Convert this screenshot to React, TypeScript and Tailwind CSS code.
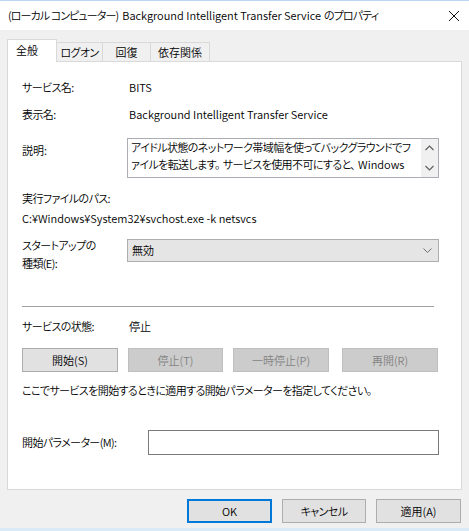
import React from "react";

const font = "font-['Noto_Sans_CJK_JP',sans-serif] [font-feature-settings:'palt'] font-[350]";
const j = "tracking-[-0.6px]";

function Btn({ children, disabled, primary, w = "w-[96px]" }: { children: React.ReactNode; disabled?: boolean; primary?: boolean; w?: string }) {
  if (primary) {
    return (
      <div className={`${w} h-[24px] flex items-center justify-center border-2 border-[#0078d7] bg-[#e1e1e1] text-black`}>
        {children}
      </div>
    );
  }
  if (disabled) {
    return (
      <div className={`${w} h-[24px] flex items-center justify-center border border-[#bfbfbf] bg-[#cccccc] text-[#838383]`}>
        {children}
      </div>
    );
  }
  return (
    <div className={`${w} h-[24px] flex items-center justify-center border border-[#adadad] bg-[#e1e1e1] text-black`}>
      {children}
    </div>
  );
}

export default function App() {
  return (
    <div className={`w-[469px] h-[531px] bg-[#f0f0f0] flex flex-col text-[11px] text-black ${font} leading-[17px] whitespace-nowrap`}>
      {/* title bar */}
      <div className="h-[30px] bg-white border-t border-[#b9d7f0] flex items-center justify-between pl-[8px] pr-[9px] shrink-0">
        <span className="text-[11px] flex">
          <span className="tracking-[-0.9px]">(ローカル コンピューター)</span>
          <span className="ml-[4px]">Background Intelligent Transfer Service</span>
          <span className="tracking-[-0.9px] ml-[3px]">のプロパティ</span>
        </span>
        <svg width="12" height="12" viewBox="0 0 12 12" className="mt-[1px]">
          <path d="M1 1 L11 11 M11 1 L1 11" stroke="#111" strokeWidth="1" />
        </svg>
      </div>

      <div className="px-[7px] flex flex-col">
        {/* tabs */}
        <div className="flex items-end h-[31px]">
          <div className="w-[50px] h-[23px] bg-white border border-b-0 border-[#d9d9d9] flex items-start pl-[8px] pt-[2px] relative z-10 -mb-[1px]">
            全般
          </div>
          <div className={`w-[46px] h-[19px] border border-b-0 border-l-0 border-[#d9d9d9] flex items-center justify-center ${j}`}>ログオン</div>
          <div className="w-[48px] h-[19px] border border-b-0 border-l-0 border-[#d9d9d9] flex items-center justify-center">回復</div>
          <div className="w-[59px] h-[19px] border border-b-0 border-l-0 border-[#d9d9d9] flex items-center justify-center">依存関係</div>
        </div>

        {/* panel */}
        <div className="h-[429px] bg-white border border-[#d9d9d9] px-[14px] flex flex-col">
          <div className="flex h-[17px] mt-[17px]">
            <div className={`w-[107px] ${j}`}>サービス名:</div>
            <div>BITS</div>
          </div>
          <div className="flex h-[17px] mt-[10px]">
            <div className={`w-[107px] ${j}`}>表示名:</div>
            <div>Background Intelligent Transfer Service</div>
          </div>
          <div className="flex mt-[15px]">
            <div className="w-[105px] pt-[4px]">説明:</div>
            <div className="w-[312px] h-[40px] border border-[#abadb3] flex">
              <div className={`flex-1 pl-[3px] leading-[17px] overflow-hidden ${j}`}>
                <div>アイドル状態のネットワーク帯域幅を使ってバックグラウンドでフ</div>
                <div>ァイルを転送します。<span className="ml-[3px]">サービスを使用不可にすると、</span><span className="tracking-normal ml-[3px]">Windows</span></div>
              </div>
              <div className="w-[17px] bg-[#f0f0f0] flex flex-col items-center justify-between py-[6px] shrink-0">
                <svg width="9" height="6" viewBox="0 0 9 6"><path d="M0.5 5 L4.5 1 L8.5 5" stroke="#606060" fill="none" strokeWidth="1.2" /></svg>
                <svg width="9" height="6" viewBox="0 0 9 6"><path d="M0.5 1 L4.5 5 L8.5 1" stroke="#606060" fill="none" strokeWidth="1.2" /></svg>
              </div>
            </div>
          </div>
          <div className={`h-[17px] mt-[12px] ${j}`}>実行ファイルのパス:</div>
          <div className="h-[17px] mt-[3px]">C:¥Windows¥System32¥svchost.exe -k netsvcs</div>
          <div className="flex mt-[9px]">
            <div className={`w-[105px] leading-[18px] ${j}`}>
              <div>スタートアップの</div>
              <div>種類(E):</div>
            </div>
            <div className="w-[312px] h-[23px] mt-[3px] border border-[#adadad] bg-[#e5e5e5] flex items-center justify-between pl-[4px] pr-[6px]">
              <span>無効</span>
              <svg width="9" height="5" viewBox="0 0 9 5"><path d="M0.5 0.5 L4.5 4.5 L8.5 0.5" stroke="#707070" fill="none" strokeWidth="1" /></svg>
            </div>
          </div>
          <div className="h-px bg-[#a0a0a0] w-[412px] mt-[34px]"></div>
          <div className="flex h-[17px] mt-[11px]">
            <div className={`w-[107px] ${j}`}>サービスの状態:</div>
            <div>停止</div>
          </div>
          <div className="flex mt-[13px] gap-[10px]">
            <Btn>開始(S)</Btn>
            <Btn disabled w="w-[95px]">停止(T)</Btn>
            <Btn disabled>一時停止(P)</Btn>
            <div className="ml-[3px]"><Btn disabled>再開(R)</Btn></div>
          </div>
          <div className={`h-[17px] mt-[10px] ${j}`}>ここでサービスを開始するときに適用する開始パラメーターを指定してください。</div>
          <div className="flex items-center mt-[31px]">
            <div className={`w-[126px] ${j}`}>開始パラメーター(M):</div>
            <div className="w-[291px] h-[25px] border border-[#7a7a7a] bg-white"></div>
          </div>
        </div>

        {/* bottom buttons */}
        <div className="flex justify-end gap-[10px] mt-[9px] pr-[1px]">
          <Btn primary w="w-[85px]">OK</Btn>
          <Btn w="w-[84px]"><span className={j}>キャンセル</span></Btn>
          <Btn w="w-[85px]">適用(A)</Btn>
        </div>
      </div>
      <div className="flex-1"></div>
      <div className="h-[3px] bg-[#dbeaf7]"></div>
    </div>
  );
}
